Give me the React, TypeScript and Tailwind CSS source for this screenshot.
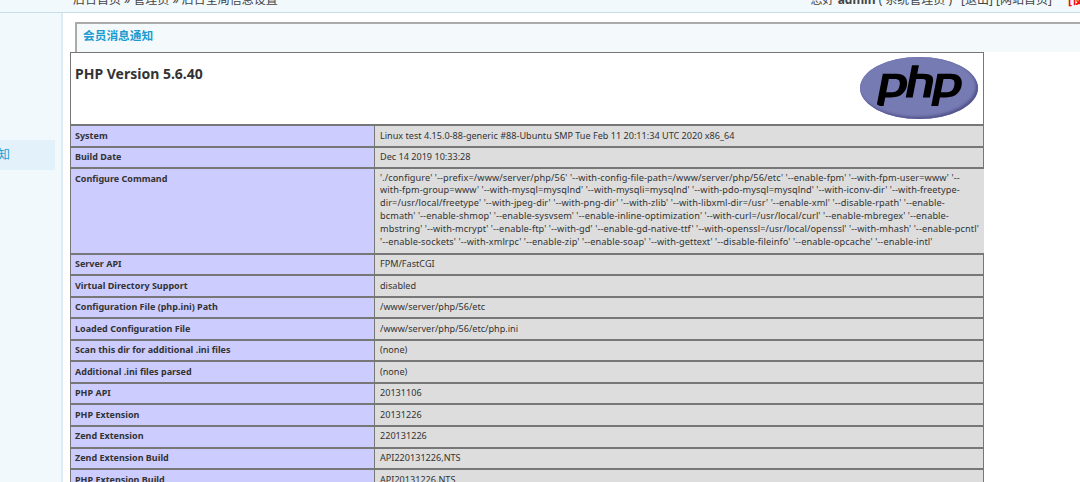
import type { ReactNode } from 'react'
import { SiPhp } from 'react-icons/si'

const font = { fontFamily: '"Noto Sans", "Noto Sans CJK SC", sans-serif' }

const rows = [
  ['Server API', 'FPM/FastCGI'],
  ['Virtual Directory Support', 'disabled'],
  ['Configuration File (php.ini) Path', '/www/server/php/56/etc'],
  ['Loaded Configuration File', '/www/server/php/56/etc/php.ini'],
  ['Scan this dir for additional .ini files', '(none)'],
  ['Additional .ini files parsed', '(none)'],
  ['PHP API', '20131106'],
  ['PHP Extension', '20131226'],
  ['Zend Extension', '220131226'],
  ['Zend Extension Build', 'API220131226,NTS'],
  ['PHP Extension Build', 'API20131226,NTS'],
]

const configure = [
  "'./configure' '--prefix=/www/server/php/56' '--with-config-file-path=/www/server/php/56/etc' '--enable-fpm' '--with-fpm-user=www' '--",
  "with-fpm-group=www' '--with-mysql=mysqlnd' '--with-mysqli=mysqlnd' '--with-pdo-mysql=mysqlnd' '--with-iconv-dir' '--with-freetype-",
  "dir=/usr/local/freetype' '--with-jpeg-dir' '--with-png-dir' '--with-zlib' '--with-libxml-dir=/usr' '--enable-xml' '--disable-rpath' '--enable-",
  "bcmath' '--enable-shmop' '--enable-sysvsem' '--enable-inline-optimization' '--with-curl=/usr/local/curl' '--enable-mbregex' '--enable-",
  "mbstring' '--with-mcrypt' '--enable-ftp' '--with-gd' '--enable-gd-native-ttf' '--with-openssl=/usr/local/openssl' '--with-mhash' '--enable-pcntl'",
  "'--enable-sockets' '--with-xmlrpc' '--enable-zip' '--enable-soap' '--with-gettext' '--disable-fileinfo' '--enable-opcache' '--enable-intl'",
]

function Row({ label, value, tall }: { label: string; value: ReactNode; tall?: boolean }) {
  return (
    <div className={`flex border-t-2 border-[#777] ${tall ? 'h-[85.5px]' : 'h-[21.55px]'}`}>
      <div className="w-[304px] shrink-0 border-r border-[#777] bg-[#ccccff] px-[4px] py-[2.5px] text-[9px] font-bold leading-[14px] text-[#333]">
        {label}
      </div>
      <div className="flex-1 bg-[#dddddd] px-[5px] py-[2.5px] text-[9.1px] leading-[14px] text-[#333]">
        {value}
      </div>
    </div>
  )
}

export default function App() {
  return (
    <div className="flex h-[482px] w-[1080px] flex-col overflow-hidden bg-white" style={font}>
      <header className="flex h-[13px] shrink-0 items-start justify-between overflow-hidden border-b border-[#c5dfea] bg-[#f2f9fd] pl-[73px] text-[12px] leading-[16px] text-[#444]">
        <span className="mt-[-8px]">后台首页 » 管理员 » 后台全局信息设置</span>
        <span className="mt-[-8px] flex whitespace-nowrap">
          <span>您好 <b>admin</b> ( 系统管理员 )</span>
          <span className="ml-[9px]">[退出] [网站首页]</span>
          <span className="ml-[16px] w-[12px] overflow-hidden font-bold text-[#f00]">[使</span>
        </span>
      </header>
      <div className="flex flex-1">
        <aside className="w-[63px] shrink-0 border-r-2 border-[#dcebf3] bg-[#f2f9fd] pt-[127px]">
          <div className="flex h-[30px] w-[55px] items-center bg-[#e3f1fb] text-[12px] text-[#1a9bd0]">
            <span className="ml-[-2px]">知</span>
          </div>
        </aside>
        <main className="min-w-0 flex-1 pl-[7px]">
          <div className="ml-[5px] mt-[9px] h-[30px] border-l-2 border-t-2 border-[#aaa] bg-[#f4f9fc] pl-[6px] text-[11.7px] font-bold leading-[22px] text-[#1a9bd0]">
            会员消息通知
          </div>
          <div className="w-[914px] border-x border-b border-[#777]">
            <div className="flex h-[72px] items-start justify-between border-t border-[#777] bg-white pl-[4px] pr-[5px]">
              <h1 className="mt-[12px] text-[14px] font-bold leading-[18px] text-[#333]">PHP Version 5.6.40</h1>
              <div className="relative mt-[4px] h-[62px] w-[118px] overflow-hidden rounded-[50%] bg-[#777bb3]">
                <div className="absolute inset-[5px] rounded-[50%] bg-black" />
                <SiPhp className="absolute left-[-2px] top-[-30px] text-[#777bb3]" size={122} />
                <div className="absolute inset-0 rounded-[50%] shadow-[inset_-2px_-2px_3px_rgba(50,50,100,0.55)]" />
              </div>
            </div>
            <Row label="System" value="Linux test 4.15.0-88-generic #88-Ubuntu SMP Tue Feb 11 20:11:34 UTC 2020 x86_64" />
            <Row label="Build Date" value="Dec 14 2019 10:33:28" />
            <Row
              label="Configure Command"
              tall
              value={configure.map(line => (
                <div key={line} className="whitespace-nowrap text-[9.2px] leading-[12.8px] tracking-[0.09px]">
                  {line}
                </div>
              ))}
            />
            {rows.map(([l, v]) => (
              <Row key={l} label={l} value={v} />
            ))}
          </div>
        </main>
      </div>
    </div>
  )
}
